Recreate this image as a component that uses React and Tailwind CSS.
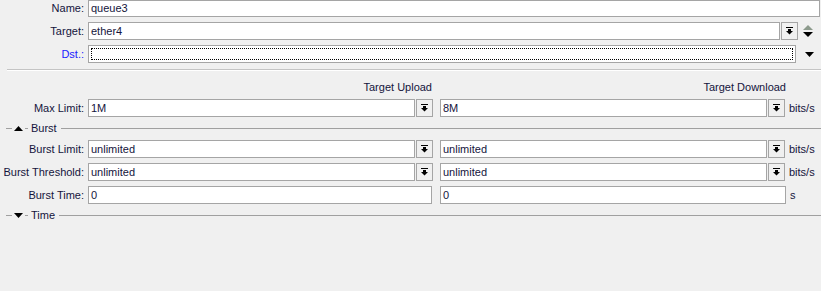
import React from 'react';

const FIELD = 'h-[18px] border border-[#a5a5a5] bg-white flex items-center pl-[2px] text-[#14143c] shrink-0';
const BTN = 'h-[18px] w-[17px] border border-[#a5a5a5] bg-[#f0f0f0] flex items-center justify-center shrink-0';

function DownBarIcon() {
  return (
    <svg width="7" height="8" viewBox="0 0 7 8">
      <rect x="0" y="0" width="7" height="1" fill="#000" />
      <rect x="2" y="2" width="3" height="2" fill="#000" />
      <polygon points="0,4 7,4 3.5,7.5" fill="#000" />
    </svg>
  );
}

function DropBtn({ className = '' }) {
  return (
    <div className={`${BTN} ${className}`}>
      <DownBarIcon />
    </div>
  );
}

function Label({ children, blue }) {
  return (
    <div className={`w-[84px] mr-[4px] text-right shrink-0 ${blue ? 'text-[#1a1aff]' : 'text-[#14143c]'}`}>
      {children}
    </div>
  );
}

function Section({ title, open }) {
  return (
    <div className="flex items-center h-[12px] pl-[6px]">
      <div className="w-[6px] h-px bg-[#a0a0a0]" />
      <svg width="9" height="5" viewBox="0 0 9 5" className="ml-[2px]">
        {open ? (
          <polygon points="0,0 9,0 4.5,5" fill="#000" />
        ) : (
          <polygon points="0,5 9,5 4.5,0" fill="#000" />
        )}
      </svg>
      <div className="ml-[2px] w-[3px] h-px bg-[#a0a0a0]" />
      <div className="ml-[3px] text-[#14143c]">{title}</div>
      <div className="ml-[4px] flex-1 h-px bg-[#a0a0a0]" />
    </div>
  );
}

function RateRow({ label, up, down, unit = 'bits/s', noBtn }) {
  return (
    <div className="flex items-center h-[18px]">
      <Label>{label}</Label>
      {noBtn ? (
        <div className={`${FIELD} w-[344px]`}>{up}</div>
      ) : (
        <>
          <div className={`${FIELD} w-[327px]`}>{up}</div>
          <DropBtn className="ml-px" />
        </>
      )}
      {noBtn ? (
        <div className={`${FIELD} w-[346px] ml-[8px]`}>{down}</div>
      ) : (
        <>
          <div className={`${FIELD} w-[327px] ml-[7px]`}>{down}</div>
          <DropBtn className="ml-px" />
        </>
      )}
      <div className="ml-[4px] text-[#14143c]">{unit}</div>
    </div>
  );
}

export default function App() {
  return (
    <div className="w-[821px] h-[291px] bg-[#f0f0f0] overflow-hidden font-[Liberation_Sans,Arial,sans-serif] text-[11px] leading-none">
      <div className="flex items-center h-[17px]">
        <Label>Name:</Label>
        <div className={`${FIELD} !h-[17px] w-[732px]`}>queue3</div>
      </div>

      <div className="flex items-center h-[18px] mt-[5px]">
        <Label>Target:</Label>
        <div className={`${FIELD} w-[692px]`}>ether4</div>
        <DropBtn className="ml-px" />
        <svg width="10" height="12" viewBox="0 0 10 12" className="ml-[5px]">
          <polygon points="0,5 10,5 5,0" fill="#8c9a8c" />
          <polygon points="0,7 10,7 5,12" fill="#000" />
        </svg>
      </div>

      <div className="flex items-center h-[18px] mt-[5px]">
        <Label blue>Dst.:</Label>
        <div className={`${FIELD} w-[708px] p-[2px]`}>
          <div className="w-full h-full border border-dotted border-[#000]" />
        </div>
        <svg width="9" height="5" viewBox="0 0 9 5" className="ml-[9px]">
          <polygon points="0,0 9,0 4.5,5" fill="#000" />
        </svg>
      </div>

      <div className="ml-[7px] mt-[6px] border-t border-[#c4c4c4] border-b border-b-white" />

      <div className="flex items-center h-[12px] mt-[10px] text-[#14143c]">
        <div className="w-[88px] shrink-0" />
        <div className="w-[344px] text-right">Target Upload</div>
        <div className="w-[346px] ml-[8px] text-right">Target Download</div>
      </div>

      <div className="mt-[6px]">
        <RateRow label="Max Limit:" up="1M" down="8M" />
      </div>

      <div className="mt-[5px]">
        <Section title="Burst" />
      </div>

      <div className="mt-[6px] flex flex-col gap-[5px]">
        <RateRow label="Burst Limit:" up="unlimited" down="unlimited" />
        <RateRow label="Burst Threshold:" up="unlimited" down="unlimited" />
        <RateRow label="Burst Time:" up="0" down="0" unit="s" noBtn />
      </div>

      <div className="mt-[5px]">
        <Section title="Time" open />
      </div>
    </div>
  );
}
